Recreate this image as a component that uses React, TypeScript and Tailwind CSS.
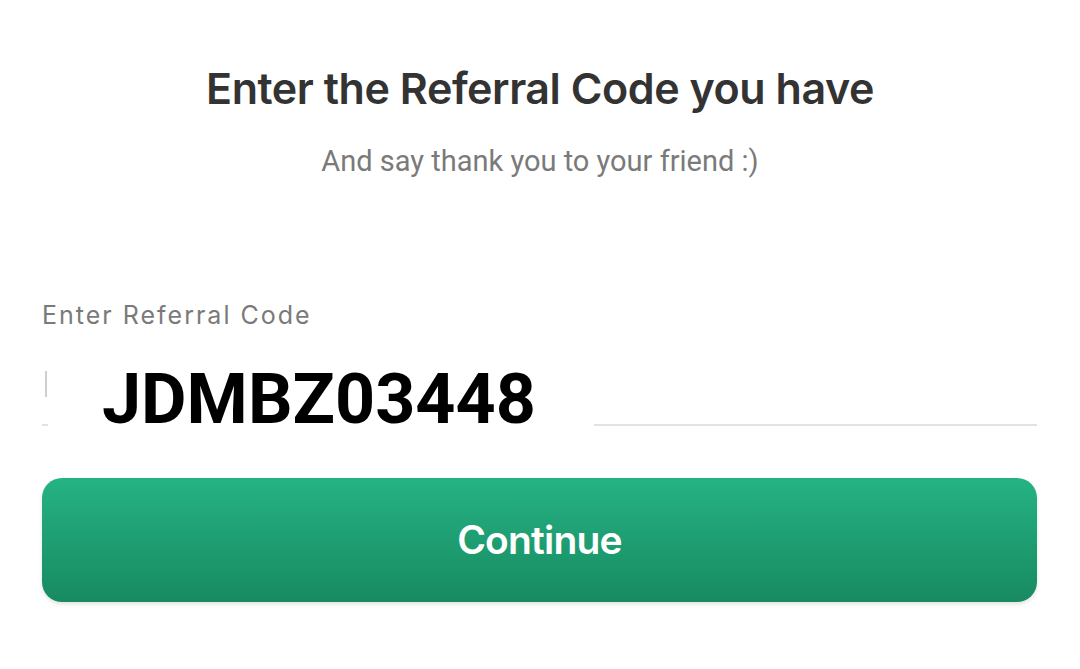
import React from "react";

export default function App() {
  return (
    <div className="w-[1080px] h-[669px] bg-white flex flex-col overflow-hidden" style={{ fontFamily: "Inter, 'Noto Sans', sans-serif" }}>
      <h1 className="mt-[62px] text-center text-[43px] leading-[52px] font-semibold text-[#333333] tracking-[-0.45px]">
        Enter the Referral Code you have
      </h1>
      <p
        className="mt-[29px] text-center text-[29px] leading-[36px] text-[#7a7a7a]"
        style={{ fontFamily: "Roboto, 'Liberation Sans', sans-serif" }}
      >
        And say thank you to your friend :)
      </p>
      <div className="mt-[120px] pl-[42px] pr-[43px] flex flex-col">
        <label className="text-[25px] leading-[32px] text-[#7a7a7a] tracking-[2px]">Enter Referral Code</label>
        <div className="relative mt-[23px] h-[72px] border-b-[2px] border-[#e2e2e2]">
          <div className="absolute left-[3px] top-[17px] w-[2px] h-[26px] bg-[#cfcfcf]" />
          <div className="absolute left-[6px] top-0 bottom-[-3px] w-[546px] bg-white">
            <div
              className="ml-[54px] mt-[10px] text-[70px] leading-none font-bold text-black"
              style={{ fontFamily: "Roboto, 'Liberation Sans', sans-serif" }}
            >
              JDMBZ03448
            </div>
          </div>
        </div>
        <button className="mt-[52px] h-[124px] w-full rounded-[20px] bg-gradient-to-b from-[#25b384] to-[#188a61] shadow-[0_2px_4px_rgba(0,0,0,0.12)] text-white text-[39px] font-semibold tracking-[-0.8px]">
          Continue
        </button>
      </div>
    </div>
  );
}
